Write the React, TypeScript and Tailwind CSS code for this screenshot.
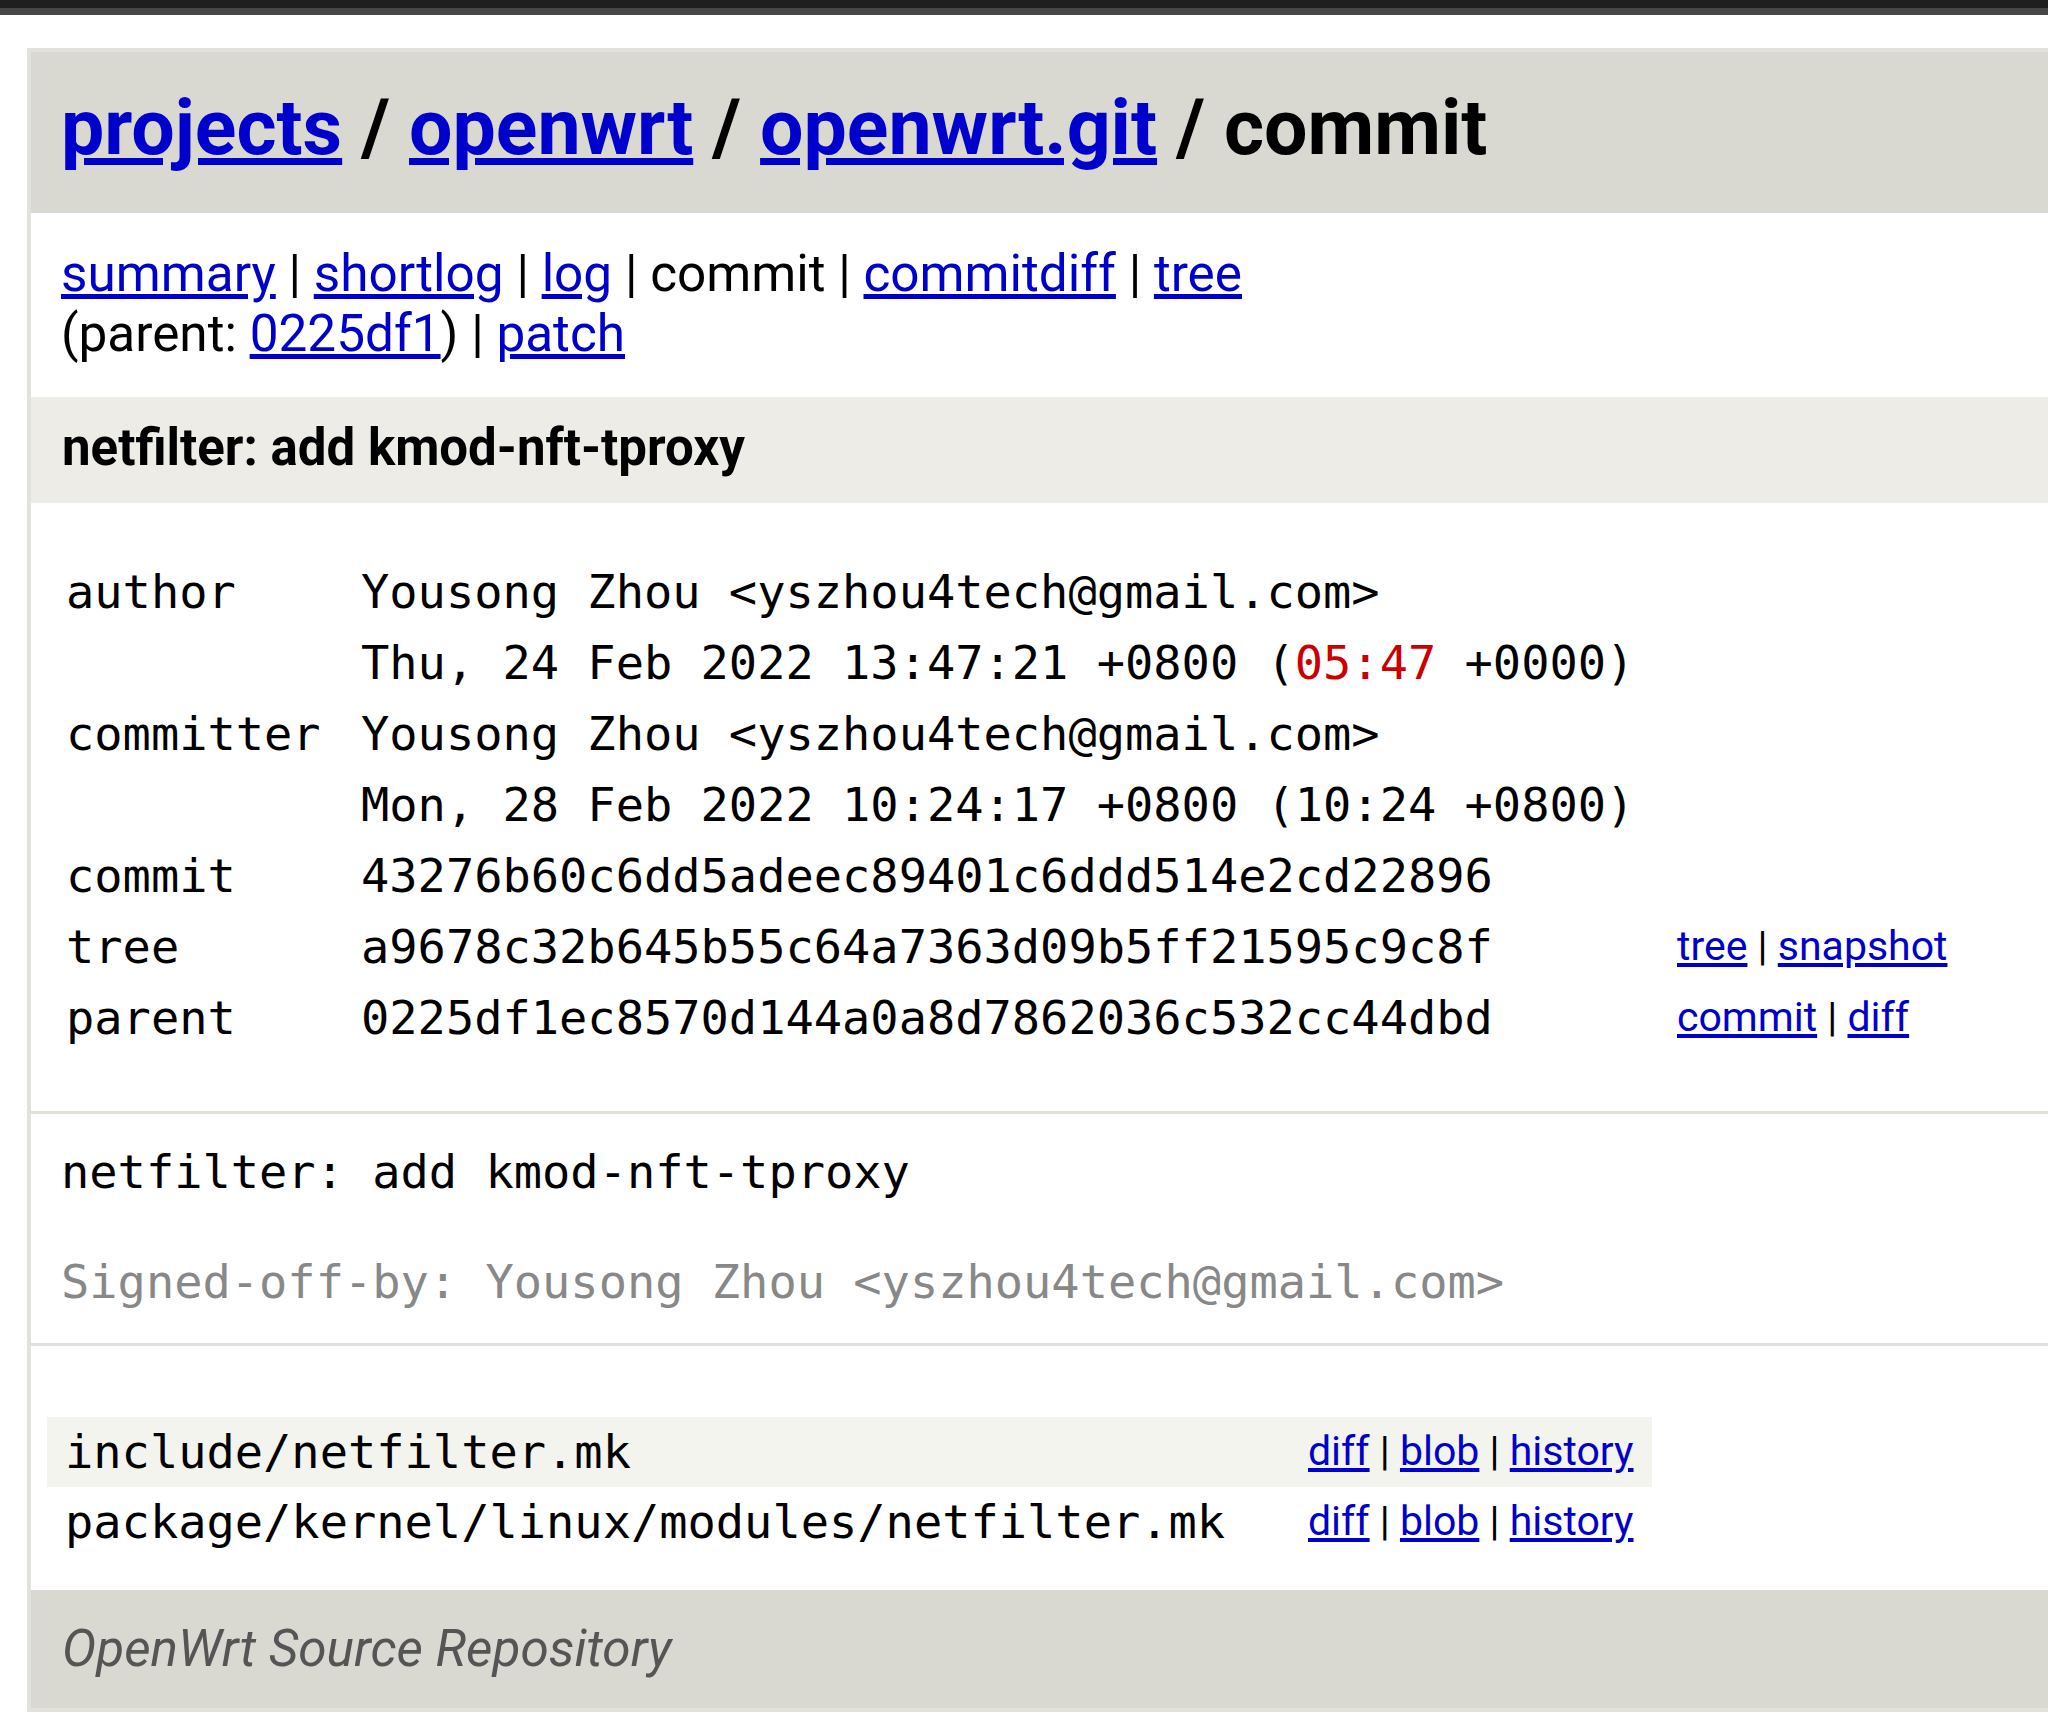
const sans = '[font-family:Roboto,"Liberation_Sans",Arial,sans-serif]';
const mono = '[font-family:"DejaVu_Sans_Mono","Liberation_Mono",monospace]';

function Link({ children }: { children: React.ReactNode }) {
  return <a className="cursor-pointer text-[#0000cc] underline">{children}</a>;
}

function Sep() {
  return <span>{' | '}</span>;
}

type Prop = {
  label: string;
  value: React.ReactNode;
  links?: string[];
};

const props: Prop[] = [
  { label: 'author', value: 'Yousong Zhou <yszhou4tech@gmail.com>' },
  {
    label: '',
    value: (
      <>
        Thu, 24 Feb 2022 13:47:21 +0800 (<span className="text-[#cc0000]">05:47</span> +0000)
      </>
    ),
  },
  { label: 'committer', value: 'Yousong Zhou <yszhou4tech@gmail.com>' },
  { label: '', value: 'Mon, 28 Feb 2022 10:24:17 +0800 (10:24 +0800)' },
  { label: 'commit', value: '43276b60c6dd5adeec89401c6ddd514e2cd22896' },
  { label: 'tree', value: 'a9678c32b645b55c64a7363d09b5ff21595c9c8f', links: ['tree', 'snapshot'] },
  { label: 'parent', value: '0225df1ec8570d144a0a8d7862036c532cc44dbd', links: ['commit', 'diff'] },
];

const files = ['include/netfilter.mk', 'package/kernel/linux/modules/netfilter.mk'];

function LinkList({ items }: { items: string[] }) {
  return (
    <span className={`${sans} relative -top-[3px] text-[41px] whitespace-pre`}>
      {items.map((l, i) => (
        <span key={l}>
          {i > 0 && <Sep />}
          <Link>{l}</Link>
        </span>
      ))}
    </span>
  );
}

export default function App() {
  return (
    <div className={`min-h-screen overflow-hidden bg-white text-black ${sans}`}>
      <div className="h-[8px] bg-[#1f1f1f]" />
      <div className="h-[7px] bg-[#474747]" />

      <div className="pl-[27px] pt-[33px]">
        <div className="w-[2100px] border-t-4 border-b-4 border-l-4 border-[#e2e1db]">
          {/* page header */}
          <div className="h-[161px] bg-[#d9d8d1] pl-[30px] pt-[32px] text-[77px] font-bold leading-[89px] whitespace-pre">
            <Link>projects</Link>
            {' / '}
            <Link>openwrt</Link>
            {' / '}
            <Link>openwrt.git</Link>
            {' / commit'}
          </div>

          {/* nav */}
          <div className="pl-[30px] pt-[31px] pb-[33px] text-[51.3px] leading-[60px] whitespace-pre">
            <div>
              <Link>summary</Link>
              <Sep />
              <Link>shortlog</Link>
              <Sep />
              <Link>log</Link>
              <Sep />
              commit
              <Sep />
              <Link>commitdiff</Link>
              <Sep />
              <Link>tree</Link>
            </div>
            <div>
              (parent: <Link>0225df1</Link>)<Sep />
              <Link>patch</Link>
            </div>
          </div>

          {/* title */}
          <div className="h-[106px] bg-[#edece6] pl-[31px] pt-[22px] text-[51px] font-bold leading-[58px]">
            netfilter: add kmod-nft-tproxy
          </div>

          {/* object header */}
          <div className={`h-[608px] pl-[35px] pt-[53px] ${mono} text-[47px]`}>
            {props.map((p, i) => (
              <div key={i} className="flex h-[71px] items-baseline leading-[71px] whitespace-pre">
                <span className="w-[295px] shrink-0">{p.label}</span>
                <span className="w-[1316px] shrink-0">{p.value}</span>
                {p.links && <LinkList items={p.links} />}
              </div>
            ))}
          </div>

          {/* commit message */}
          <div
            className={`border-t-[3px] border-b-[3px] border-[#e2e1db] pl-[30px] pt-[30px] pb-[34px] ${mono} text-[47px] leading-[55px] whitespace-pre`}
          >
            <div>netfilter: add kmod-nft-tproxy</div>
            <div>&nbsp;</div>
            <div className="text-[#888888]">Signed-off-by: Yousong Zhou &lt;yszhou4tech@gmail.com&gt;</div>
          </div>

          {/* diff tree */}
          <div className="pl-[16px] pt-[71px] pb-[33px]">
            {files.map((f, i) => (
              <div
                key={f}
                className={`flex h-[70px] w-[1605px] items-baseline leading-[70px] ${i === 0 ? 'bg-[#f4f4ef]' : ''}`}
              >
                <span className={`w-[1202px] shrink-0 pl-[18px] ${mono} text-[47px] whitespace-pre`}>{f}</span>
                <span className="w-[41px] shrink-0" />
                <span className="pl-[18px]">
                  <LinkList items={['diff', 'blob', 'history']} />
                </span>
              </div>
            ))}
          </div>

          {/* footer */}
          <div className="h-[118px] bg-[#d9d8d1] pl-[31px] text-[51.3px] italic leading-[118px] text-[#555555]">
            OpenWrt Source Repository
          </div>
        </div>
      </div>
    </div>
  );
}
